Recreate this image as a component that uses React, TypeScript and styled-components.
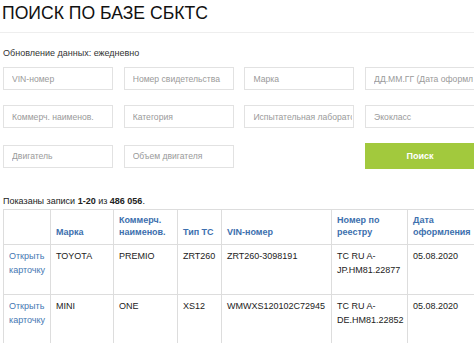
import React from "react";
import styled, { createGlobalStyle } from "styled-components";

const GlobalStyle = createGlobalStyle`
    html, body {
        margin: 0;
        padding: 0;
        background: #fff;
        overflow: hidden;
    }
    body {
        font-family: "Liberation Sans", Arial, sans-serif;
        color: #222;
    }
`;

const fields: { placeholder: string }[] = [
    { placeholder: "VIN-номер" },
    { placeholder: "Номер свидетельства" },
    { placeholder: "Марка" },
    { placeholder: "ДД.ММ.ГГ (Дата оформления)" },
    { placeholder: "Коммерч. наименов." },
    { placeholder: "Категория" },
    { placeholder: "Испытательная лаборатория" },
    { placeholder: "Экокласс" },
    { placeholder: "Двигатель" },
    { placeholder: "Объем двигателя" },
];

type Record = {
    mark: string;
    name: string;
    type: string;
    vin: string;
    reg: [string, string];
    date: string;
};

const records: Record[] = [
    {
        mark: "TOYOTA",
        name: "PREMIO",
        type: "ZRT260",
        vin: "ZRT260-3098191",
        reg: ["TC RU A-", "JP.HM81.22877"],
        date: "05.08.2020",
    },
    {
        mark: "MINI",
        name: "ONE",
        type: "XS12",
        vin: "WMWXS120102C72945",
        reg: ["TC RU A-", "DE.HM81.22852"],
        date: "05.08.2020",
    },
];

const columns = [47, 63, 64, 44, 110, 76, 80];

function App() {
    return (
        <Page>
            <GlobalStyle />
            <Title>ПОИСК ПО БАЗЕ СБКТС</Title>
            <Divider />
            <Content>
                <Note>Обновление данных: ежедневно</Note>
                <Form>
                    {fields.map((f) => (
                        <Field key={f.placeholder} placeholder={f.placeholder} />
                    ))}
                    <Spacer />
                    <SearchButton type="button">Поиск</SearchButton>
                </Form>
                <Summary>
                    Показаны записи <b>1-20</b> из <b>486 056</b>.
                </Summary>
                <Table>
                    <colgroup>
                        {columns.map((w, i) => (
                            <col key={i} style={{ width: w }} />
                        ))}
                    </colgroup>
                    <thead>
                        <tr>
                            <Th />
                            <Th>Марка</Th>
                            <Th>
                                Коммерч.
                                <br />
                                наименов.
                            </Th>
                            <Th>Тип ТС</Th>
                            <Th>VIN-номер</Th>
                            <Th>
                                Номер по
                                <br />
                                реестру
                            </Th>
                            <Th>
                                Дата
                                <br />
                                оформления
                            </Th>
                        </tr>
                    </thead>
                    <tbody>
                        {records.map((r) => (
                            <tr key={r.vin}>
                                <Td>
                                    <CardLink href="#">
                                        Открыть
                                        <br />
                                        карточку
                                    </CardLink>
                                </Td>
                                <Td>{r.mark}</Td>
                                <Td>{r.name}</Td>
                                <Td>{r.type}</Td>
                                <Td>{r.vin}</Td>
                                <Td>
                                    {r.reg[0]}
                                    <br />
                                    {r.reg[1]}
                                </Td>
                                <Td>{r.date}</Td>
                            </tr>
                        ))}
                    </tbody>
                </Table>
            </Content>
        </Page>
    );
}

export default App;

const Page = styled.div`
    width: 474px;
    height: 343px;
    overflow: hidden;
`;

const Title = styled.h1`
    margin: 0;
    padding: 3px 0 0 2px;
    font-size: 17.6px;
    line-height: 20px;
    font-weight: normal;
    color: #111;
    white-space: nowrap;
`;

const Divider = styled.div`
    height: 1px;
    margin-top: 9px;
    background: #eeeeee;
`;

const Content = styled.div`
    padding-left: 3px;
`;

const Note = styled.div`
    margin-top: 15px;
    font-size: 9px;
    line-height: 11px;
    color: #333;
`;

const Form = styled.div`
    display: grid;
    grid-template-columns: repeat(4, 110px);
    grid-auto-rows: auto;
    column-gap: 10.7px;
    row-gap: 15px;
    align-items: center;
    margin-top: 8px;
    width: 520px;
`;

const Field = styled.input`
    box-sizing: border-box;
    width: 110px;
    height: 23px;
    padding: 0 1px 0 8px;
    border: 1px solid #e2e2e2;
    border-radius: 0;
    background: #fff;
    font-family: "Liberation Sans", Arial, sans-serif;
    font-size: 8.6px;
    color: #333;
    outline: none;

    &::placeholder {
        color: #9a9a9a;
    }
`;

const Spacer = styled.div``;

const SearchButton = styled.button`
    height: 26px;
    width: 110px;
    border: none;
    background: #a2c93d;
    color: #fff;
    font-family: "Liberation Sans", Arial, sans-serif;
    font-size: 9px;
    font-weight: bold;
    cursor: pointer;
`;

const Summary = styled.div`
    margin-top: 27px;
    font-size: 9px;
    line-height: 11px;
    color: #222;

    b {
        font-weight: bold;
    }
`;

const Table = styled.table`
    margin-top: 2px;
    width: 484px;
    table-layout: fixed;
    border-collapse: collapse;
    font-size: 9px;
    color: #222;
`;

const Th = styled.th`
    height: 35px;
    box-sizing: border-box;
    padding: 0 5px 6px;
    border: 1px solid #dddddd;
    text-align: left;
    vertical-align: bottom;
    font-weight: bold;
    line-height: 12px;
    color: #3d6fae;
`;

const Td = styled.td`
    height: 50px;
    box-sizing: border-box;
    padding: 5px 5px 0;
    border: 1px solid #dddddd;
    vertical-align: top;
    line-height: 13.5px;
    white-space: nowrap;
`;

const CardLink = styled.a`
    color: #4577b3;
    text-decoration: none;
`;
